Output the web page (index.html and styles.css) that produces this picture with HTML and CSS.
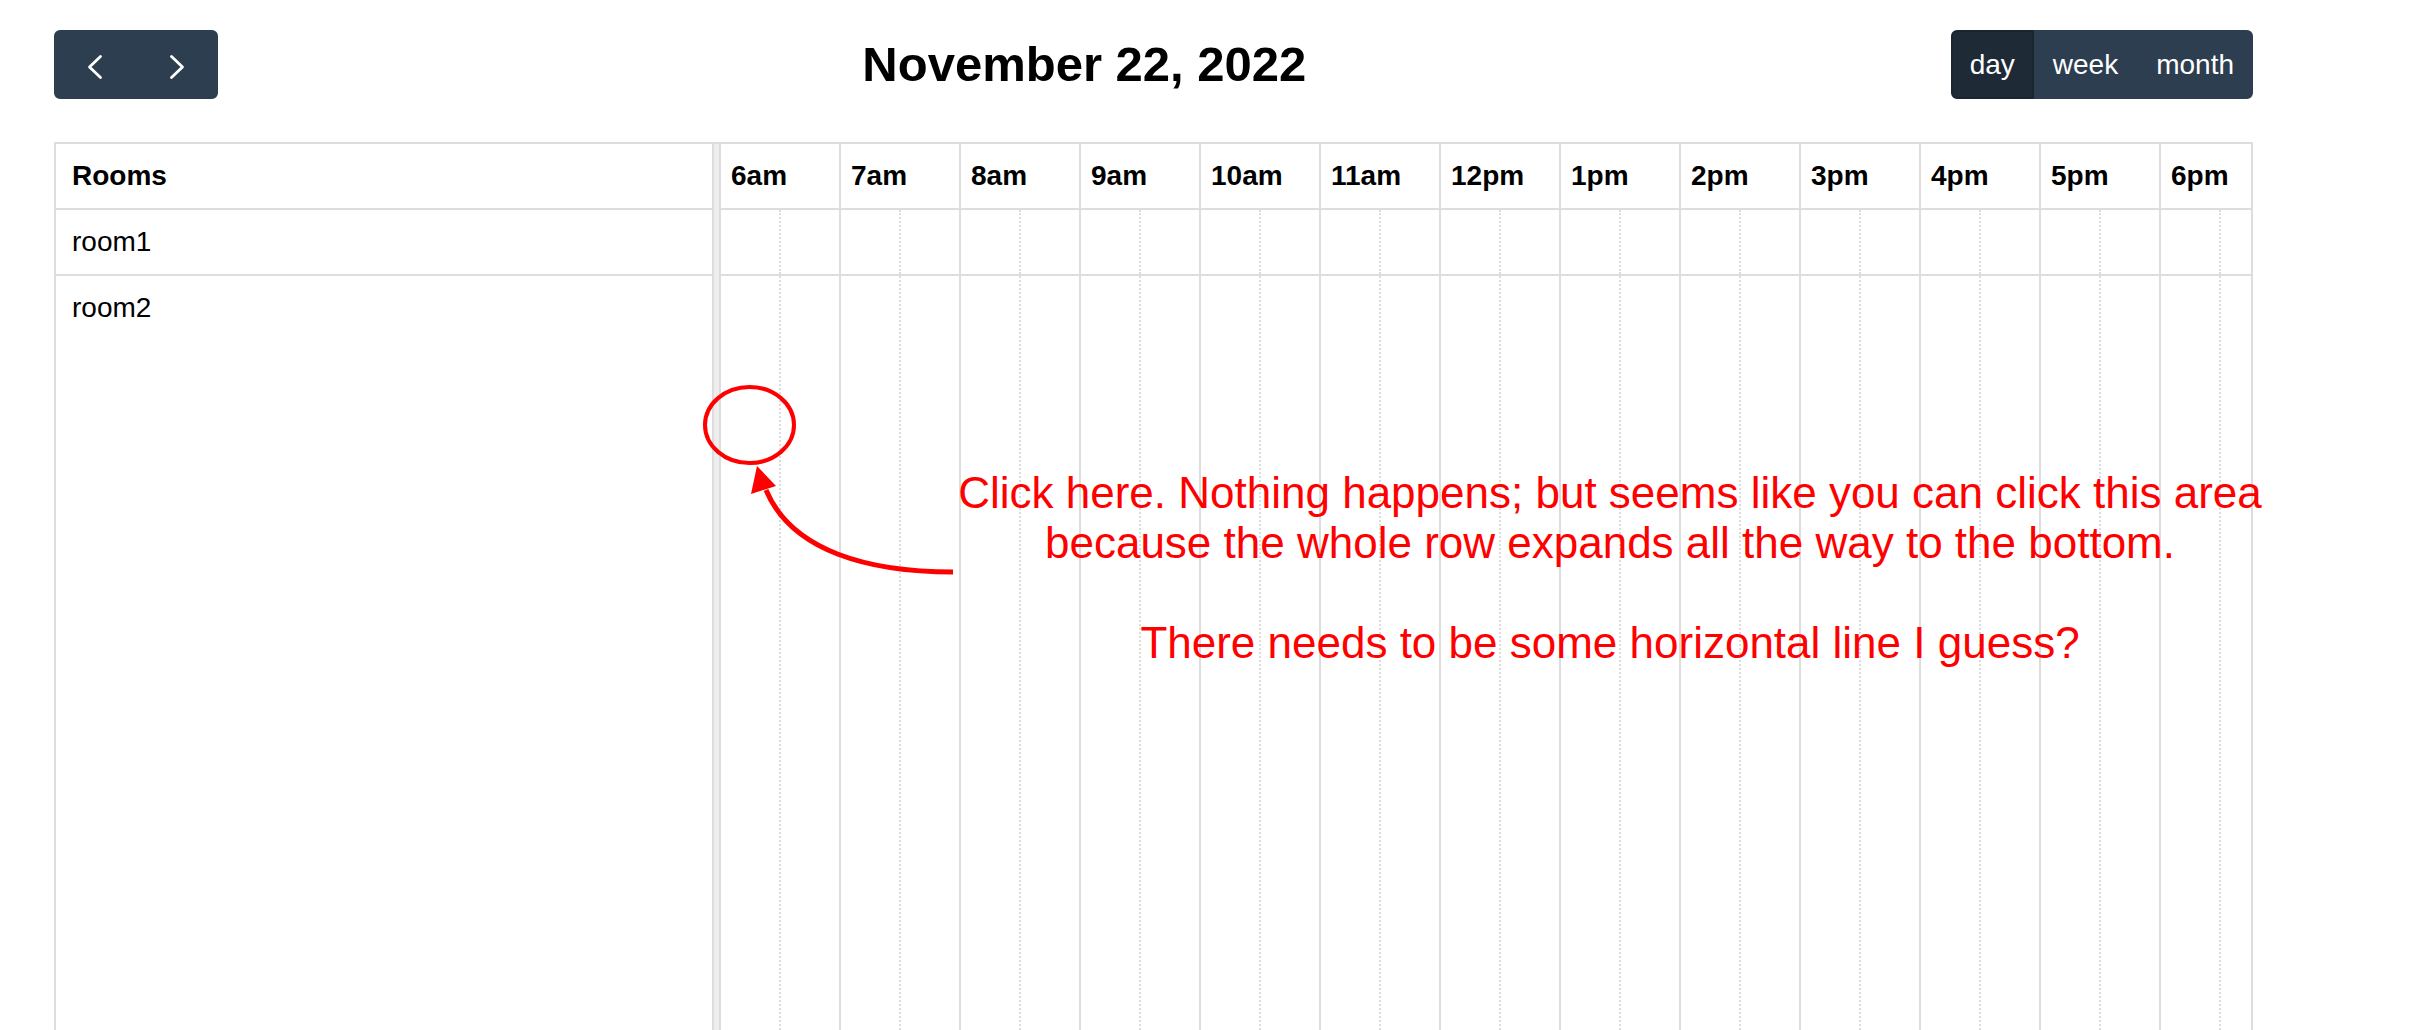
FILE: index.html
```html
<!DOCTYPE html>
<html lang="en">
<head>
<meta charset="utf-8">
<title>Resource timeline</title>
<link rel="stylesheet" href="styles.css">
</head>
<body>
<div class="page">
  <div class="toolbar">
    <div class="btn-group">
      <button class="btn btn-icon" aria-label="prev">
        <svg viewBox="0 0 42 42"><polyline points="26.5,12.5 15.5,23 26.5,33.5" fill="none" stroke="#fff" stroke-width="2.8" stroke-linecap="round" stroke-linejoin="round"/></svg>
      </button>
      <button class="btn btn-icon" aria-label="next">
        <svg viewBox="0 0 42 42"><polyline points="15.5,12.5 26.5,23 15.5,33.5" fill="none" stroke="#fff" stroke-width="2.8" stroke-linecap="round" stroke-linejoin="round"/></svg>
      </button>
    </div>
    <h2 class="title">November 22, 2022</h2>
    <div class="btn-group">
      <button class="btn btn-active">day</button>
      <button class="btn">week</button>
      <button class="btn">month</button>
    </div>
  </div>

  <div class="timeline">
    <div class="res-area">
      <div class="cell cell-head">Rooms</div>
      <div class="cell">room1</div>
      <div class="cell cell-fill">room2</div>
    </div>
    <div class="divider"></div>
    <div class="time-area">
      <div class="time-head">
        <div class="slot-label">6am</div>
        <div class="slot-label">7am</div>
        <div class="slot-label">8am</div>
        <div class="slot-label">9am</div>
        <div class="slot-label">10am</div>
        <div class="slot-label">11am</div>
        <div class="slot-label">12pm</div>
        <div class="slot-label">1pm</div>
        <div class="slot-label">2pm</div>
        <div class="slot-label">3pm</div>
        <div class="slot-label">4pm</div>
        <div class="slot-label">5pm</div>
        <div class="slot-label">6pm</div>
      </div>
      <div class="lane">
        <div class="slot"><div class="half"></div><div class="half-minor"></div></div>
        <div class="slot"><div class="half"></div><div class="half-minor"></div></div>
        <div class="slot"><div class="half"></div><div class="half-minor"></div></div>
        <div class="slot"><div class="half"></div><div class="half-minor"></div></div>
        <div class="slot"><div class="half"></div><div class="half-minor"></div></div>
        <div class="slot"><div class="half"></div><div class="half-minor"></div></div>
        <div class="slot"><div class="half"></div><div class="half-minor"></div></div>
        <div class="slot"><div class="half"></div><div class="half-minor"></div></div>
        <div class="slot"><div class="half"></div><div class="half-minor"></div></div>
        <div class="slot"><div class="half"></div><div class="half-minor"></div></div>
        <div class="slot"><div class="half"></div><div class="half-minor"></div></div>
        <div class="slot"><div class="half"></div><div class="half-minor"></div></div>
        <div class="slot"><div class="half"></div><div class="half-minor"></div></div>
      </div>
      <div class="lane lane-fill">
        <div class="slot"><div class="half"></div><div class="half-minor"></div></div>
        <div class="slot"><div class="half"></div><div class="half-minor"></div></div>
        <div class="slot"><div class="half"></div><div class="half-minor"></div></div>
        <div class="slot"><div class="half"></div><div class="half-minor"></div></div>
        <div class="slot"><div class="half"></div><div class="half-minor"></div></div>
        <div class="slot"><div class="half"></div><div class="half-minor"></div></div>
        <div class="slot"><div class="half"></div><div class="half-minor"></div></div>
        <div class="slot"><div class="half"></div><div class="half-minor"></div></div>
        <div class="slot"><div class="half"></div><div class="half-minor"></div></div>
        <div class="slot"><div class="half"></div><div class="half-minor"></div></div>
        <div class="slot"><div class="half"></div><div class="half-minor"></div></div>
        <div class="slot"><div class="half"></div><div class="half-minor"></div></div>
        <div class="slot"><div class="half"></div><div class="half-minor"></div></div>
      </div>
    </div>
  </div>

  <svg class="annot" viewBox="0 0 2422 1030" aria-hidden="true">
    <ellipse cx="749.5" cy="425" rx="44.5" ry="38" fill="none" stroke="#ff0000" stroke-width="4"/>
    <path d="M953,572 C870,572 792,552 766,490" fill="none" stroke="#ff0000" stroke-width="5"/>
    <polygon points="757,466 776,486 751,494" fill="#ff0000"/>
  </svg>
  <div class="note">Click here. Nothing happens; but seems like you can click this area<br>because the whole row expands all the way to the bottom.<br><br>There needs to be some horizontal line I guess?</div>
</div>
</body>
</html>
```

FILE: styles.css
```css
* {
  box-sizing: border-box;
}

html,
body {
  margin: 0;
  height: 100%;
  overflow: hidden;
  background: #fff;
}

body {
  font-family: "Liberation Sans", Arial, sans-serif;
  color: #000;
}

.page {
  position: relative;
  height: 1030px;
  padding: 30px 169px 0 54px;
  display: flex;
  flex-direction: column;
}

/* toolbar */
.toolbar {
  display: flex;
  justify-content: space-between;
  align-items: center;
  margin-bottom: 43px;
  flex-shrink: 0;
}

.title {
  margin: 0;
  font-size: 49px;
  font-weight: 700;
  line-height: 1.2;
}

.btn-group {
  display: flex;
}

.btn {
  font-family: inherit;
  font-size: 28px;
  line-height: 42px;
  color: #fff;
  background: #2c3e50;
  border: 2px solid #2c3e50;
  padding: 11.5px 17px;
  margin: 0;
  display: flex;
  align-items: center;
  border-radius: 0;
}

.btn-group .btn:first-child {
  border-radius: 6px 0 0 6px;
}

.btn-group .btn:last-child {
  border-radius: 0 6px 6px 0;
}

.btn-icon {
  padding: 11.5px 18px;
}

.btn-icon svg {
  width: 42px;
  height: 42px;
  display: block;
}

.btn-active {
  background: #1e2b37;
  border-color: #1a252f;
}

/* timeline */
.timeline {
  flex: 1;
  display: flex;
  border-top: 2px solid #ddd;
  min-height: 0;
}

.res-area {
  width: 658px;
  flex-shrink: 0;
  border-left: 2px solid #ddd;
  display: flex;
  flex-direction: column;
}

.cell {
  height: 66px;
  flex-shrink: 0;
  border-bottom: 2px solid #ddd;
  padding: 16px 16px 0;
  font-size: 28px;
  line-height: 32px;
}

.cell-head {
  font-weight: 700;
}

.cell-fill {
  flex: 1;
  border-bottom: 0;
}

.divider {
  width: 7px;
  flex-shrink: 0;
  border-left: 2px solid #ddd;
  background: #eee;
}

.time-area {
  flex: 1;
  min-width: 0;
  overflow: hidden;
  border-right: 2px solid #ddd;
  display: flex;
  flex-direction: column;
}

.time-head {
  display: flex;
  height: 66px;
  flex-shrink: 0;
  border-bottom: 2px solid #ddd;
}

.slot-label {
  flex: 0 0 120px;
  border-left: 2px solid #ddd;
  padding: 16px 0 0 10px;
  font-size: 28px;
  line-height: 32px;
  font-weight: 700;
  white-space: nowrap;
}

.lane {
  display: flex;
  height: 66px;
  flex-shrink: 0;
  border-bottom: 2px solid #ddd;
}

.lane-fill {
  flex: 1;
  border-bottom: 0;
}

.slot {
  flex: 0 0 120px;
  border-left: 2px solid #ddd;
  display: flex;
}

.half {
  width: 58px;
  flex-shrink: 0;
}

.half-minor {
  flex: 1;
  border-left: 2px dotted #dcdcdc;
}

/* annotation overlay */
.annot {
  position: absolute;
  left: 0;
  top: 0;
  width: 2422px;
  height: 1030px;
  pointer-events: none;
}

.note {
  position: absolute;
  left: 910px;
  top: 468px;
  width: 1400px;
  text-align: center;
  color: #ff0000;
  font-size: 44px;
  line-height: 50px;
  pointer-events: none;
}
```
